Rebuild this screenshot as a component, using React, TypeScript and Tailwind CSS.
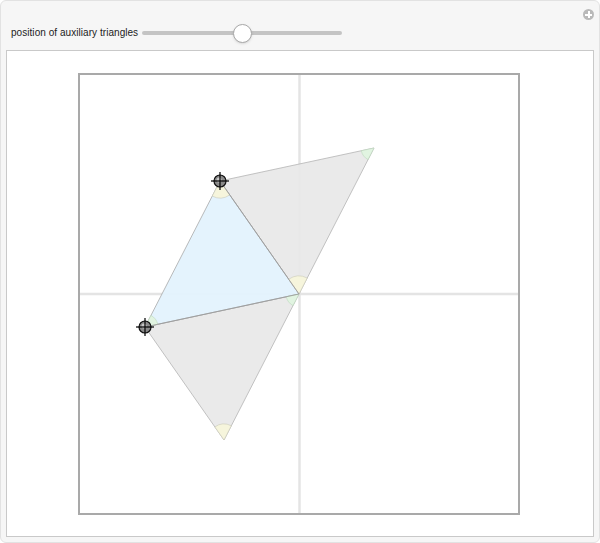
import React from "react";

type Pt = [number, number];

const A: Pt = [220, 181];
const B: Pt = [145, 327];
const C: Pt = [299, 294];
const D: Pt = [374, 148];
const E: Pt = [224, 440];

const poly = (pts: Pt[]) => pts.map((p) => p.join(",")).join(" ");

// small pie wedge at vertex v between the directions to p and q
const wedge = (v: Pt, p: Pt, q: Pt, r: number) => {
    const at = (t: Pt): Pt => {
        const dx = t[0] - v[0];
        const dy = t[1] - v[1];
        const len = Math.hypot(dx, dy);
        return [v[0] + (dx / len) * r, v[1] + (dy / len) * r];
    };
    const s = at(p);
    const e = at(q);
    const cross = (p[0] - v[0]) * (q[1] - v[1]) - (p[1] - v[1]) * (q[0] - v[0]);
    const sweep = cross > 0 ? 1 : 0;
    return `M${v[0]},${v[1]} L${s[0]},${s[1]} A${r},${r} 0 0 ${sweep} ${e[0]},${e[1]} Z`;
};

const Locator = ({ p }: { p: Pt }) => (
    <g>
        <circle cx={p[0]} cy={p[1]} r={6} fill="#8a8a8a" stroke="#111" strokeWidth={1.2} />
        <circle cx={p[0] - 1} cy={p[1] - 1} r={2.5} fill="#c8c8c8" />
        <line x1={p[0] - 9} y1={p[1]} x2={p[0] + 9} y2={p[1]} stroke="#000" strokeWidth={1.2} />
        <line x1={p[0]} y1={p[1] - 9} x2={p[0]} y2={p[1] + 9} stroke="#000" strokeWidth={1.2} />
    </g>
);

const App = () => {
    const yellow = "#f6f5dc";
    const green = "#e1f4e1";
    const arcStroke = "#c9c9b8";

    return (
        <div className="w-[600px] h-[543px] bg-white p-0">
            <div className="w-full h-full bg-[#f6f6f6] border border-[#e2e2e2] rounded-md flex flex-col relative">
                {/* plus button top right */}
                <div className="absolute right-[5px] top-[8px] w-[11px] h-[11px] rounded-full bg-[#b9b9b9] flex items-center justify-center">
                    <div className="relative w-[7px] h-[7px]">
                        <div className="absolute left-[2.5px] top-0 w-[2px] h-[7px] bg-white" />
                        <div className="absolute top-[2.5px] left-0 w-[7px] h-[2px] bg-white" />
                    </div>
                </div>

                {/* control row */}
                <div className="flex items-center h-[49px] pt-[14px] pl-[10px]">
                    <span
                        className="text-[10px] text-[#222] leading-none tracking-[0.05px]"
                        style={{ fontFamily: "'Liberation Sans', Arial, sans-serif" }}
                    >
                        position of auxiliary triangles
                    </span>
                    <div className="relative ml-[4px] w-[200px] h-[18px] flex items-center">
                        <div className="w-full h-[4px] rounded-full bg-[#c4c4c4]" />
                        <div className="absolute left-[91px] top-0 w-[19px] h-[19px] rounded-full bg-white border border-[#a9a9a9] shadow-sm" />
                    </div>
                </div>

                {/* graphics panel */}
                <div className="mx-[5px] h-[487px] bg-white border border-[#c9c9c9]">
                    <svg width={586} height={485} viewBox="7 51 586 485">
                        <rect x={79} y={74} width={440} height={440} fill="none" stroke="#a9a9a9" strokeWidth={2} />
                        <line x1={299.5} y1={75} x2={299.5} y2={513} stroke="#e4e4e4" strokeWidth={2.5} />
                        <line x1={80} y1={294} x2={518} y2={294} stroke="#e4e4e4" strokeWidth={2.5} />

                        <polygon points={poly([A, C, D])} fill="#e8e8e8" fillOpacity={0.92} stroke="#b4b4b4" strokeWidth={0.8} />
                        <polygon points={poly([B, C, E])} fill="#e8e8e8" fillOpacity={0.92} stroke="#b4b4b4" strokeWidth={0.8} />
                        <polygon points={poly([A, B, C])} fill="#e3f2fd" fillOpacity={0.95} stroke="#a8a8a8" strokeWidth={0.8} />

                        <path d={wedge(A, B, C, 17)} fill={yellow} stroke={arcStroke} strokeWidth={0.6} />
                        <path d={wedge(C, A, D, 18)} fill={yellow} stroke={arcStroke} strokeWidth={0.6} />
                        <path d={wedge(E, B, C, 16)} fill={yellow} stroke={arcStroke} strokeWidth={0.6} />
                        <path d={wedge(B, A, C, 13)} fill={green} stroke="#bcd6bc" strokeWidth={0.6} />
                        <path d={wedge(C, B, E, 13)} fill={green} stroke="#bcd6bc" strokeWidth={0.6} />
                        <path d={wedge(D, A, C, 13)} fill={green} stroke="#bcd6bc" strokeWidth={0.6} />

                        <line x1={B[0]} y1={B[1]} x2={C[0]} y2={C[1]} stroke="#999" strokeWidth={0.8} />
                        <line x1={A[0]} y1={A[1]} x2={C[0]} y2={C[1]} stroke="#999" strokeWidth={0.8} />

                        <Locator p={A} />
                        <Locator p={B} />
                    </svg>
                </div>
            </div>
        </div>
    );
};

export default App;
